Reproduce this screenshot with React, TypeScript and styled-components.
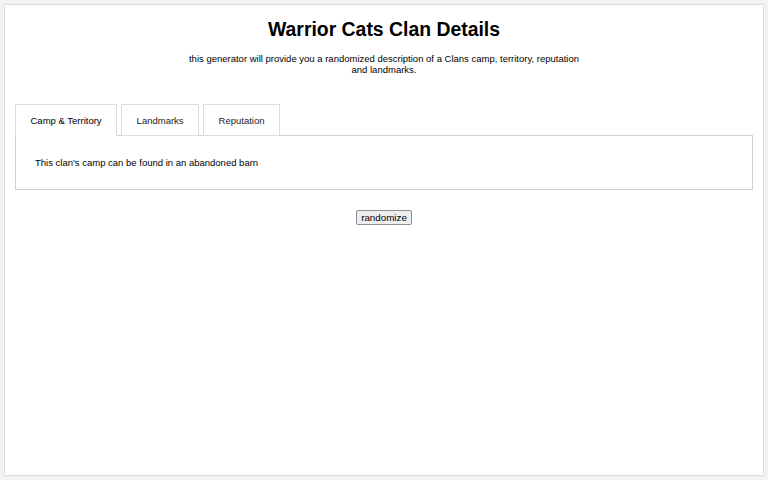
import React, { useState } from "react";
import styled, { createGlobalStyle } from "styled-components";

const GlobalStyle = createGlobalStyle`
  html, body {
    margin: 0;
    padding: 0;
    background: #f3f3f3;
    font-family: "Liberation Sans", Arial, sans-serif;
  }
`;

type TabKey = "camp" | "landmarks" | "reputation";

const tabs: { key: TabKey; label: string }[] = [
  { key: "camp", label: "Camp & Territory" },
  { key: "landmarks", label: "Landmarks" },
  { key: "reputation", label: "Reputation" },
];

const content: Record<TabKey, string> = {
  camp: "This clan's camp can be found in an abandoned barn",
  landmarks: "A great oak stands at the heart of the territory",
  reputation: "Other clans see this clan as proud and secretive",
};

export default function App() {
  const [active, setActive] = useState<TabKey>("camp");

  return (
    <>
      <GlobalStyle />
      <Page>
        <Card>
          <Title>Warrior Cats Clan Details</Title>
          <Intro>
            this generator will provide you a randomized description of a Clans
            camp, territory, reputation and landmarks.
          </Intro>
          <TabBar>
            {tabs.map((t) => (
              <Tab
                key={t.key}
                $active={t.key === active}
                onClick={() => setActive(t.key)}
              >
                {t.label}
              </Tab>
            ))}
          </TabBar>
          <Panel>{content[active]}</Panel>
          <Actions>
            <RandomButton>randomize</RandomButton>
          </Actions>
        </Card>
      </Page>
    </>
  );
}

const Page = styled.div`
  box-sizing: border-box;
  width: 100%;
  height: 480px;
  padding: 4px;
`;

const Card = styled.div`
  box-sizing: border-box;
  height: 100%;
  background: #fff;
  border: 1px solid #dcdcdc;
  padding: 0 10px;
  display: flex;
  flex-direction: column;
`;

const Title = styled.h1`
  margin: 13px 0 0 0;
  text-align: center;
  font-size: 19.4px;
  font-weight: bold;
  color: #000;
  line-height: 22px;
`;

const Intro = styled.p`
  margin: 13px auto 0 auto;
  max-width: 400px;
  text-align: center;
  font-size: 9.5px;
  line-height: 11px;
  color: #000;
`;

const TabBar = styled.div`
  display: flex;
  gap: 4px;
  margin-top: 29px;
  position: relative;
  z-index: 1;
`;

const Tab = styled.button<{ $active: boolean }>`
  box-sizing: border-box;
  height: 32px;
  padding: 0 14.5px;
  margin-bottom: -1px;
  background: #fff;
  border: 1px solid #dcdcdc;
  border-bottom: 1px solid ${(p) => (p.$active ? "#fff" : "#dcdcdc")};
  font-family: "Liberation Sans", Arial, sans-serif;
  font-size: 9.5px;
  color: ${(p) => (p.$active ? "#000" : "#222")};
  cursor: pointer;
`;

const Panel = styled.div`
  box-sizing: border-box;
  height: 55px;
  border: 1px solid #cfcfcf;
  padding: 21px 19px 0 19px;
  font-size: 9.5px;
  color: #000;
`;

const Actions = styled.div`
  display: flex;
  justify-content: center;
  margin-top: 20px;
`;

const RandomButton = styled.button`
  height: 15px;
  padding: 0 4px;
  font-family: "Liberation Sans", Arial, sans-serif;
  font-size: 9.8px;
  line-height: 13px;
  color: #000;
  background: #efefef;
  border: 1px solid #8f8f8f;
  border-radius: 2px;
`;
